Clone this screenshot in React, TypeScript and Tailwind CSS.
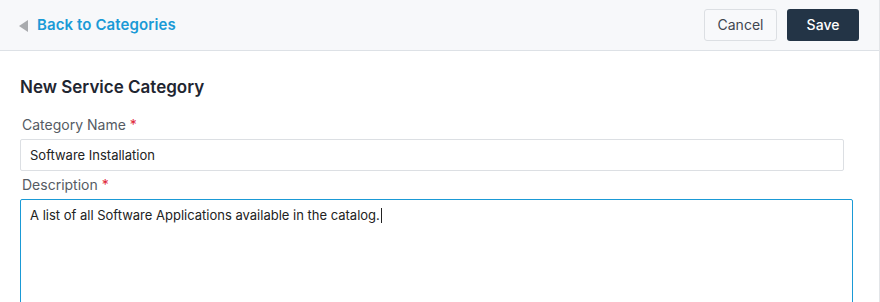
export default function App() {
  return (
    <div className="h-[302px] w-[880px] overflow-hidden border-r border-[#e3e5e8] bg-white font-['Inter','Liberation_Sans',sans-serif]">
      {/* Header */}
      <div className="flex h-[51px] items-center justify-between border-b border-[#dde1e6] bg-[#f7f8fa] pl-[19px] pr-[20px]">
        <a href="#" className="flex items-center gap-[10px] text-[15px] font-semibold text-[#1a9ad6]">
          <svg width="9" height="12" viewBox="0 0 9 12" className="mt-[1px] shrink-0">
            <path d="M9 0 L9 12 L0 6 Z" fill="#a9abae" />
          </svg>
          <span className="-ml-[1px] tracking-[0.1px]">Back to Categories</span>
        </a>
        <div className="flex items-center gap-[10px] pb-[1px]">
          <button className="h-[32px] w-[73px] rounded-[3px] border border-[#dcdfe3] bg-[#f8f9fb] text-[14px] text-[#3f4650]">
            Cancel
          </button>
          <button className="h-[32px] w-[72px] rounded-[3px] bg-[#233446] text-[14px] font-medium text-white">
            Save
          </button>
        </div>
      </div>

      {/* Form */}
      <div className="px-5 pt-[25px]">
        <h1 className="text-[17px] font-semibold leading-[22px] text-[#1f2631]">New Service Category</h1>
        <div className="mt-[17px]">
          <label className="block pl-[2px] text-[14px] leading-[20px] text-[#555b63]">
            Category Name <span className="text-[#e0283a]">*</span>
          </label>
          <input
            readOnly
            value="Software Installation"
            className="mt-[4px] block h-[32px] w-[824px] rounded-[2px] border border-[#dcdfe3] px-[9px] text-[13px] text-[#222] outline-none"
          />
        </div>
        <div className="mt-[4px]">
          <label className="block pl-[2px] text-[14px] leading-[20px] text-[#555b63]">
            Description <span className="text-[#e0283a]">*</span>
          </label>
          <div className="mt-[4px] h-[120px] w-[833px] rounded-[2px] border border-[#1a9ad6] px-[9px] pt-[5px] text-[13px] text-[#222]">
            A list of all Software Applications available in the catalog.
            <span className="ml-[1px] inline-block h-[15px] w-px translate-y-[3px] bg-[#222]" />
          </div>
        </div>
      </div>
    </div>
  );
}
